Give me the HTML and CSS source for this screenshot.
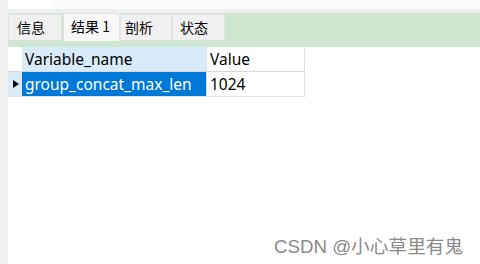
FILE: index.html
```html
<!DOCTYPE html>
<html>
<head>
<meta charset="utf-8">
<link rel="stylesheet" href="styles.css">
</head>
<body>
<div class="app">
  <div class="gutter"></div>
  <div class="main">
    <div class="topstrip"><div class="topwhite"></div></div>
    <div class="sep"></div>
    <div class="tabbar">
      <div class="tabs">
        <div class="tab t1">信息</div>
        <div class="tab active t2">结果 1</div>
        <div class="tab t3">剖析</div>
        <div class="tab t4">状态</div>
      </div>
      <div class="tabline"></div>
    </div>
    <div class="grid">
      <div class="row head">
        <div class="ind"></div>
        <div class="cell c1 hsel">Variable_name</div>
        <div class="cell c2">Value</div>
      </div>
      <div class="row data">
        <div class="ind isel"><span class="arrow"></span></div>
        <div class="cell c1 sel">group_concat_max_len</div>
        <div class="cell c2">1024</div>
      </div>
    </div>
  </div>
</div>
<div class="watermark">CSDN @小心草里有鬼</div>
</body>
</html>
```
FILE: styles.css
```css
html, body {
  margin: 0;
  padding: 0;
  width: 480px;
  height: 264px;
  overflow: hidden;
  background: #ffffff;
  font-family: "Noto Sans", "Noto Sans CJK SC", sans-serif;
}
.app {
  display: flex;
  height: 264px;
}
.gutter {
  width: 8px;
  background: #f0f0f0;
  flex: none;
}
.main {
  flex: 1;
  display: flex;
  flex-direction: column;
}
.topstrip {
  height: 9px;
  background: #fbfbfb;
  display: flex;
}
.topwhite {
  width: 44px;
  background: #ffffff;
}
.sep {
  height: 4px;
  background: #efefef;
}
.tabbar {
  height: 34px;
  background: #cde7d0;
  position: relative;
}
.tabs {
  display: flex;
  align-items: flex-start;
  height: 28px;
}
.tab {
  box-sizing: border-box;
  height: 26px;
  margin-top: 1px;
  background: #f0f0f0;
  border: 1px solid #e3e3e3;
  border-bottom: none;
  font-family: "Noto Sans CJK SC", sans-serif;
  font-size: 14px;
  color: #000;
  line-height: 24px;
  padding-left: 8px;
}
.t1 { width: 54px; }
.t2 { width: 57px; margin-left: 1px; }
.t3 { width: 52px; padding-left: 4px; }
.t4 { width: 53px; padding-left: 7px; }
.tab.active {
  background: #f7f7f7;
  height: 28px;
  margin-top: 0;
  line-height: 25px;
  padding-left: 7px;
  position: relative;
  z-index: 1;
}
.tabline {
  position: absolute;
  left: 0;
  right: 0;
  top: 27px;
  height: 1px;
  background: #dcdcdc;
}
.grid {
  display: flex;
  flex-direction: column;
}
.row {
  display: flex;
  height: 25px;
  box-sizing: border-box;
}
.row.head { border-bottom: 1px solid #d8d8d8; width: 297px; }
.row.data { border-bottom: 1px solid #e6e6e6; width: 297px; }
.ind {
  width: 14px;
  flex: none;
  display: flex;
  align-items: center;
  justify-content: center;
}
.ind.isel { background: #d9ebf9; }
.arrow {
  width: 0;
  height: 0;
  border-top: 4px solid transparent;
  border-bottom: 4px solid transparent;
  border-left: 6px solid #000;
  margin-left: 1px;
}
.cell {
  box-sizing: border-box;
  font-size: 15.5px;
  line-height: 24px;
  padding-left: 3px;
  color: #000;
  white-space: nowrap;
}
.c1 { width: 185px; border-right: 1px solid #e0e0e0; }
.c2 { width: 98px; border-right: 1px solid #e0e0e0; }
.hsel { background: #d9ebf9; }
.sel { background: #0078d7; color: #ffffff; }
.watermark {
  position: absolute;
  left: 274px;
  top: 231px;
  font-family: "Liberation Sans", "Noto Sans CJK SC", sans-serif;
  font-size: 18.7px;
  color: #8a8a8a;
  white-space: nowrap;
}
```
